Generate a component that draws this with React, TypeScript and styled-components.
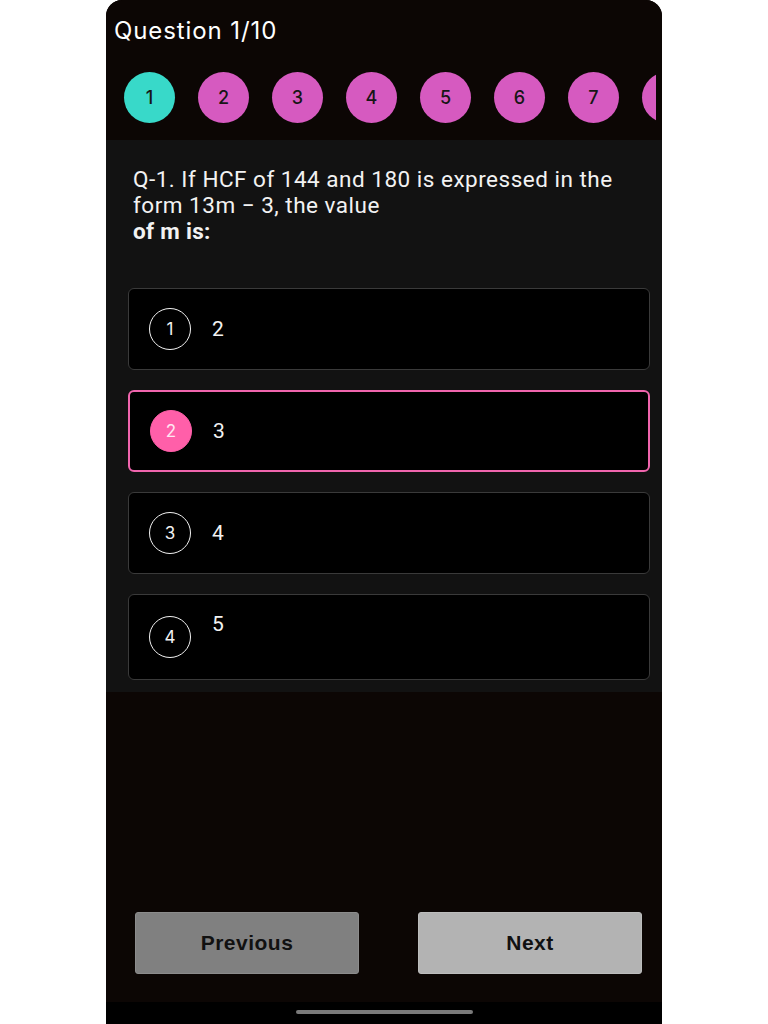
import { useState } from 'react';
import styled, { createGlobalStyle } from 'styled-components';

const GlobalStyle = createGlobalStyle`
  html, body {
    margin: 0;
    padding: 0;
    background: #ffffff;
  }
  * {
    box-sizing: border-box;
  }
`;

const questionNumbers = [1, 2, 3, 4, 5, 6, 7, 8, 9, 10];

const options = [
  { id: 1, label: '2' },
  { id: 2, label: '3' },
  { id: 3, label: '4' },
  { id: 4, label: '5\n\u00a0' },
];

const App = () => {
  const [current, setCurrent] = useState(1);
  const [selected, setSelected] = useState(2);

  return (
    <>
      <GlobalStyle />
      <Page>
        <Screen>
          <Header>
            <Title>Question {current}/10</Title>
            <StepStrip>
              {questionNumbers.map((n) => (
                <Step key={n} active={n === current} onClick={() => setCurrent(n)}>
                  {n}
                </Step>
              ))}
            </StepStrip>
          </Header>

          <QuestionPanel>
            <QuestionText>
              Q-1. If HCF of 144 and 180 is expressed in the form 13m − 3, the value
              <br />
              <strong>of m is:</strong>
            </QuestionText>
            <OptionList>
              {options.map((o) => (
                <Option
                  key={o.id}
                  selected={o.id === selected}
                  onClick={() => setSelected(o.id)}
                >
                  <OptionBadge selected={o.id === selected}>{o.id}</OptionBadge>
                  <OptionLabel>{o.label}</OptionLabel>
                </Option>
              ))}
            </OptionList>
          </QuestionPanel>

          <Footer>
            <NavButton tone='dark' onClick={() => setCurrent(Math.max(1, current - 1))}>
              Previous
            </NavButton>
            <NavButton tone='light' onClick={() => setCurrent(Math.min(10, current + 1))}>
              Next
            </NavButton>
          </Footer>

          <HomeBar>
            <HomeIndicator />
          </HomeBar>
        </Screen>
      </Page>
    </>
  );
};

const Page = styled.div`
  display: flex;
  justify-content: center;
  background: #ffffff;
`;

const Screen = styled.div`
  width: 556px;
  height: 1024px;
  display: flex;
  flex-direction: column;
  background: #0c0604;
  border-radius: 16px 16px 0 0;
  overflow: hidden;
  font-family: Roboto, 'Noto Sans', sans-serif;
`;

const Header = styled.header`
  height: 140px;
  padding: 16px 6px 0 8px;
  background: #0c0604;
`;

const Title = styled.h1`
  margin: 0;
  font-family: Inter, 'Noto Sans', sans-serif;
  font-size: 24px;
  font-weight: 400;
  letter-spacing: 0.9px;
  line-height: 30px;
  color: #ffffff;
`;

const StepStrip = styled.div`
  display: flex;
  gap: 23px;
  margin-top: 26px;
  padding-left: 10px;
  overflow: hidden;
`;

const Step = styled.button<{ active: boolean }>`
  flex: 0 0 51px;
  height: 51px;
  border: none;
  border-radius: 50%;
  background: ${(p) => (p.active ? '#38d9c9' : '#d65ac0')};
  color: #161616;
  font-family: Inter, 'Noto Sans', sans-serif;
  font-size: 18px;
  font-weight: 500;
  cursor: pointer;
  padding: 0;
`;

const QuestionPanel = styled.section`
  height: 552px;
  padding: 26px 12px 0 22px;
  background: #121212;
`;

const QuestionText = styled.p`
  max-width: 505px;
  margin: 0 0 44px;
  padding-left: 5px;
  font-size: 22.5px;
  letter-spacing: 0.5px;
  line-height: 26px;
  color: #f2f2f2;

  strong {
    font-weight: 700;
    letter-spacing: 0.3px;
  }
`;

const OptionList = styled.div`
  display: flex;
  flex-direction: column;
  gap: 20px;
`;

const Option = styled.div<{ selected: boolean }>`
  display: flex;
  align-items: center;
  min-height: 82px;
  padding: 16px 20px;
  background: #000000;
  border: ${(p) => (p.selected ? '2px solid #f065ad' : '1.5px solid #3a3a3a')};
  border-radius: 6px;
  cursor: pointer;
`;

const OptionBadge = styled.span<{ selected: boolean }>`
  flex: 0 0 42px;
  height: 42px;
  display: flex;
  align-items: center;
  justify-content: center;
  border-radius: 50%;
  border: 1.5px solid ${(p) => (p.selected ? '#ff5fa9' : '#f2f2f2')};
  background: ${(p) => (p.selected ? '#ff5fa9' : 'transparent')};
  color: ${(p) => (p.selected ? '#ffe6f2' : '#f2f2f2')};
  font-family: Inter, 'Noto Sans', sans-serif;
  font-size: 17px;
`;

const OptionLabel = styled.span`
  margin-left: 21px;
  font-size: 21px;
  line-height: 26px;
  color: #f2f2f2;
  white-space: pre-line;
`;

const Footer = styled.footer`
  flex: 1;
  display: flex;
  align-items: flex-end;
  justify-content: space-between;
  padding: 0 20px 28px 29px;
  background: #0c0604;
`;

const NavButton = styled.button<{ tone: 'dark' | 'light' }>`
  width: 224px;
  height: 62px;
  border: 1px solid ${(p) => (p.tone === 'dark' ? '#8c8c8c' : '#bdbdbd')};
  border-radius: 3px;
  background: ${(p) => (p.tone === 'dark' ? '#808080' : '#b3b3b3')};
  color: #111111;
  font-family: 'Liberation Sans', Arial, sans-serif;
  font-size: 21px;
  font-weight: 700;
  letter-spacing: 0.5px;
  cursor: pointer;
`;

const HomeBar = styled.div`
  height: 22px;
  display: flex;
  justify-content: center;
  padding-top: 8px;
  background: #000000;
`;

const HomeIndicator = styled.div`
  width: 177px;
  height: 4px;
  border-radius: 2px;
  background: #7a7a7a;
`;

export default App;
